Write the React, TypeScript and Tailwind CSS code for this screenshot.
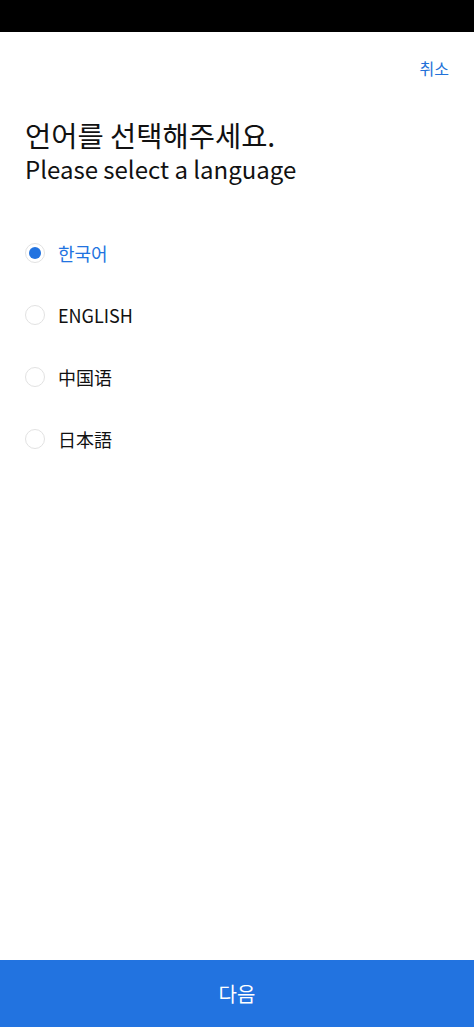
import { useState } from "react";

const font = { fontFamily: '"Noto Sans CJK KR", "Noto Sans", sans-serif' };

const languages = ["한국어", "ENGLISH", "中国语", "日本語"];

const Radio = ({ checked }: { checked: boolean }) => (
  <span className="flex h-[20px] w-[20px] shrink-0 items-center justify-center rounded-full border border-[#e2e2e2] bg-white">
    {checked && <span className="h-[12px] w-[12px] rounded-full bg-[#2273e0]" />}
  </span>
);

const App = () => {
  const [selected, setSelected] = useState(0);

  return (
    <div className="flex min-h-screen flex-col bg-white" style={font}>
      {/* Status bar */}
      <div className="h-[32px] bg-black" />

      {/* Header */}
      <header className="flex h-[72px] items-center justify-end px-[25px]">
        <button className="text-[16px] text-[#2271d8]">취소</button>
      </header>

      <main className="flex-1 px-[25px]">
        <h1 className="mt-[12px] text-[28.5px] leading-[38px] text-[#111]">언어를 선택해주세요.</h1>
        <p className="text-[24px] leading-[30px] text-[#111]">Please select a language</p>

        <ul className="mt-[38px] flex flex-col">
          {languages.map((lang, i) => (
            <li key={lang}>
              <button
                onClick={() => setSelected(i)}
                className="flex h-[62px] w-full items-center gap-[13px] text-left"
              >
                <Radio checked={selected === i} />
                <span className={`text-[18px] ${selected === i ? "text-[#2273e0]" : "text-[#111]"}`}>
                  {lang}
                </span>
              </button>
            </li>
          ))}
        </ul>
      </main>

      <button className="h-[67px] w-full bg-[#2273e0] text-[20px] text-white">다음</button>
    </div>
  );
};

export default App;
